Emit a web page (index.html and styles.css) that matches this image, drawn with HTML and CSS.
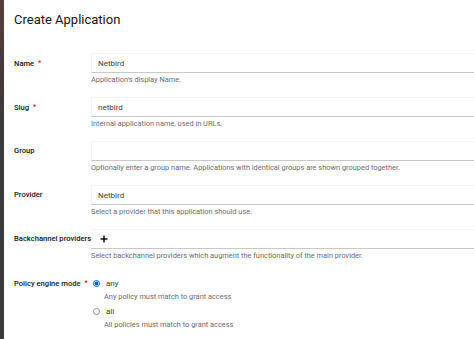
FILE: index.html
```html
<!DOCTYPE html>
<html lang="en">
<head>
    <meta charset="UTF-8">
    <meta name="viewport" content="width=device-width, initial-scale=1.0">
    <title>Create Application</title>
    <link rel="stylesheet" href="styles.css">
</head>
<body>
    <div class="shell">
        <div class="rail"></div>
        <main class="page">
            <h1 class="page-title">Create Application</h1>

            <form class="app-form">
                <div class="form-row">
                    <label class="form-label" for="app-name">Name <span class="req">*</span></label>
                    <div class="form-field">
                        <input class="form-input" id="app-name" type="text" value="Netbird">
                        <div class="form-help">Application's display Name.</div>
                    </div>
                </div>

                <div class="form-row">
                    <label class="form-label" for="app-slug">Slug <span class="req">*</span></label>
                    <div class="form-field">
                        <input class="form-input" id="app-slug" type="text" value="netbird">
                        <div class="form-help">Internal application name, used in URLs.</div>
                    </div>
                </div>

                <div class="form-row">
                    <label class="form-label" for="app-group">Group</label>
                    <div class="form-field">
                        <input class="form-input" id="app-group" type="text" value="">
                        <div class="form-help">Optionally enter a group name. Applications with identical groups are shown grouped together.</div>
                    </div>
                </div>

                <div class="form-row">
                    <label class="form-label" for="app-provider">Provider</label>
                    <div class="form-field">
                        <input class="form-input" id="app-provider" type="text" value="Netbird">
                        <div class="form-help">Select a provider that this application should use.</div>
                    </div>
                </div>

                <div class="form-row">
                    <label class="form-label">Backchannel providers</label>
                    <div class="form-field">
                        <div class="chip-box">
                            <button class="add-button" type="button" aria-label="Add">
                                <svg width="8" height="8" viewBox="0 0 8 8">
                                    <path d="M4 0.5V7.5M0.5 4H7.5" stroke="#151515" stroke-width="1.5" fill="none"/>
                                </svg>
                            </button>
                        </div>
                        <div class="form-help">Select backchannel providers which augment the functionality of the main provider.</div>
                    </div>
                </div>

                <div class="form-row policy-row">
                    <label class="form-label">Policy engine mode <span class="req">*</span></label>
                    <div class="form-field">
                        <div class="radio-item">
                            <span class="radio checked"></span>
                            <span class="radio-label">any</span>
                        </div>
                        <div class="radio-help">Any policy must match to grant access</div>
                        <div class="radio-item">
                            <span class="radio"></span>
                            <span class="radio-label">all</span>
                        </div>
                        <div class="radio-help">All policies must match to grant access</div>
                    </div>
                </div>
            </form>
        </main>
    </div>
</body>
</html>
```

FILE: styles.css
```css
body {
    margin: 0;
    background-color: #fff;
    font-family: Roboto, "Liberation Sans", Arial, sans-serif;
    color: #151515;
    overflow: hidden;
}
.shell {
    display: flex;
    min-height: 339px;
}
.rail {
    width: 4px;
    flex-shrink: 0;
    background: linear-gradient(to bottom, #5b3d3f 0%, #4a3a3b 18%, #3a3a3a 35%, #3a3a3a 100%);
}
.page {
    flex: 1;
    padding: 10px 0 0 10px;
}
.page-title {
    margin: 0;
    font-size: 13px;
    font-weight: 400;
    line-height: 20px;
}
.app-form {
    margin-top: 23px;
    display: flex;
    flex-direction: column;
    gap: 12px;
}
.form-row {
    display: grid;
    grid-template-columns: 77px 1fr;
    align-items: start;
}
.form-label {
    font-size: 7.6px;
    font-weight: 500;
    line-height: 20px;
    white-space: nowrap;
}
.req {
    color: #c9190b;
    font-size: 7px;
    margin-left: 2px;
    vertical-align: 1px;
}
.form-field {
    display: flex;
    flex-direction: column;
}
.form-input {
    box-sizing: border-box;
    width: 100%;
    height: 20px;
    margin: 0;
    padding: 0 6px;
    border: 1px solid #f3f3f3;
    border-right: none;
    border-bottom-color: #c9c9c9;
    background-color: #fff;
    font-family: Roboto, "Liberation Sans", Arial, sans-serif;
    font-size: 8px;
    color: #3c3c3c;
    outline: none;
}
.form-help {
    margin-top: 2px;
    font-size: 7.4px;
    line-height: 10px;
    color: #6a6e73;
    white-space: nowrap;
}
.chip-box {
    box-sizing: border-box;
    height: 20px;
    display: flex;
    align-items: center;
    padding-left: 9px;
    border-top: 1px solid #f3f3f3;
    border-bottom: 1px solid #c9c9c9;
}
.add-button {
    border: none;
    background: none;
    padding: 0;
    display: flex;
    cursor: pointer;
}
.policy-row {
    padding-top: 1px;
}
.policy-row .form-label {
    line-height: 18px;
}
.radio-item {
    display: flex;
    align-items: center;
    height: 18px;
    gap: 6px;
}
.radio {
    box-sizing: border-box;
    width: 7px;
    height: 7px;
    margin-left: 2px;
    border-radius: 50%;
    border: 1px solid #8a8d90;
    background-color: #fff;
}
.radio.checked {
    border-color: #06c;
    background: radial-gradient(circle, #06c 0 1.8px, #fff 2.2px);
}
.radio-label {
    font-size: 8px;
    color: #3c3c3c;
}
.radio-help {
    padding-left: 13px;
    font-size: 7.4px;
    line-height: 10px;
    color: #6a6e73;
    white-space: nowrap;
}
```
